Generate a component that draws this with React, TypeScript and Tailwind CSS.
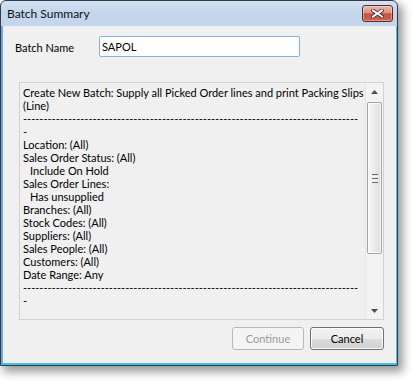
import React from "react";

const FONT = { fontFamily: "Lato, 'Liberation Sans', sans-serif" };

const lines: { text: string; indent?: boolean; dash?: boolean }[] = [
  { text: "Create New Batch: Supply all Picked Order lines and print Packing Slips" },
  { text: "(Line)" },
  { text: "", dash: true },
  { text: "-" },
  { text: "Location: (All)" },
  { text: "Sales Order Status: (All)" },
  { text: "Include On Hold", indent: true },
  { text: "Sales Order Lines:" },
  { text: "Has unsupplied", indent: true },
  { text: "Branches: (All)" },
  { text: "Stock Codes: (All)" },
  { text: "Suppliers: (All)" },
  { text: "Sales People: (All)" },
  { text: "Customers: (All)" },
  { text: "Date Range: Any" },
  { text: "", dash: true },
  { text: "-" },
];

const DASHES = "-".repeat(82);

function CloseButton() {
  return (
    <div className="mt-[4px] mr-[4px] flex h-[17px] w-[31px] items-center justify-center rounded-[3px] border border-[#5e2a24] bg-[linear-gradient(to_bottom,#e9b7ab_0%,#dc9284_45%,#c8503f_52%,#cf6450_100%)] shadow-[inset_0_0_0_1px_rgba(255,255,255,0.35)]">
      <svg width="13" height="9" viewBox="0 0 13 9">
        <path d="M2 1.5 L11 7.5 M11 1.5 L2 7.5" stroke="#3d2320" strokeWidth="3.6" strokeLinecap="square" fill="none" />
        <path d="M2 1.5 L11 7.5 M11 1.5 L2 7.5" stroke="#ffffff" strokeWidth="2" strokeLinecap="square" fill="none" />
      </svg>
    </div>
  );
}

function ScrollBar() {
  return (
    <div className="flex w-[18px] flex-col border-l border-[#e6e6e6] bg-[#f3f3f3]">
      <div className="flex h-[17px] items-center justify-center pt-[1px]">
        <svg width="7" height="4" viewBox="0 0 7 4">
          <path d="M0 4 L3.5 0 L7 4 Z" fill="#4d4d4d" />
        </svg>
      </div>
      <div className="mx-auto mt-[2px] flex h-[152px] w-[15px] items-center justify-center rounded-[2px] border border-[#a3a3a3] bg-[linear-gradient(to_right,#f7f7f7,#ececec_45%,#dcdcdc)] shadow-[inset_0_0_0_1px_rgba(255,255,255,0.8)]">
        <div className="flex flex-col gap-[1px]">
          <div className="h-[1px] w-[6px] bg-[#6b6b6b]" />
          <div className="h-[1px] w-[6px] bg-[#f8f8f8]" />
          <div className="h-[1px] w-[6px] bg-[#6b6b6b]" />
          <div className="h-[1px] w-[6px] bg-[#f8f8f8]" />
          <div className="h-[1px] w-[6px] bg-[#6b6b6b]" />
        </div>
      </div>
      <div className="flex-1" />
      <div className="flex h-[17px] items-center justify-center">
        <svg width="7" height="4" viewBox="0 0 7 4">
          <path d="M0 0 L7 0 L3.5 4 Z" fill="#4d4d4d" />
        </svg>
      </div>
    </div>
  );
}

export default function App() {
  return (
    <div className="h-[381px] w-[413px] bg-white" style={FONT}>
      <div className="flex h-[366px] w-[398px] flex-col rounded-t-[6px] border border-[#2f3c4a] bg-[linear-gradient(to_bottom,#d3e2f3_0px,#c4d6ec_12px,#bfd2ea_100%)] shadow-[4px_5px_10px_1px_rgba(0,0,0,0.4)]">
        <div className="flex h-[25px] items-start justify-between">
          <div className="pl-[6px] pt-[5px] text-[12px] leading-[16px] text-[#111]">Batch Summary</div>
          <CloseButton />
        </div>
        <div className="flex flex-1 flex-col border-b-2 border-l-2 border-r border-b-[#3fc3ec] border-l-[#6fa6dc] border-r-[#3fc3ec] bg-[#f0f0f0] pr-[12px] text-[11px] text-black">
          <div className="flex items-center pl-[12px] pt-[10px]">
            <div className="w-[84px] pt-[3px] leading-[14px]">Batch Name</div>
            <div className="flex h-[21px] w-[201px] items-center rounded-[2px] border border-[#7fb5e6] bg-white pl-[2px] leading-[14px]">
              SAPOL
            </div>
          </div>
          <div className="ml-[16px] mt-[25px] flex h-[238px] w-[365px] border border-[#d2d2d2] bg-[#f0f0f0]">
            <div className="min-w-0 flex-1 pl-[3px] pt-[3px] leading-[13px]">
              {lines.map((l, i) =>
                l.dash ? (
                  <div key={i} className="whitespace-nowrap">
                    {DASHES}
                  </div>
                ) : (
                  <div key={i} className={`whitespace-nowrap ${l.indent ? "pl-[7px]" : ""}`}>
                    {l.text}
                  </div>
                )
              )}
            </div>
            <ScrollBar />
          </div>
          <div className="mt-[7px] flex justify-end gap-[6px]">
            <div className="flex h-[23px] w-[72px] items-center justify-center rounded-[3px] border border-[#b5b9bc] bg-[#f4f4f4] leading-[14px] text-[#9a9a9a]">
              Continue
            </div>
            <div className="flex h-[23px] w-[74px] items-center justify-center rounded-[3px] border border-[#707070] bg-[linear-gradient(to_bottom,#f2f2f2_0%,#ebebeb_50%,#dddddd_51%,#cfcfcf_100%)] leading-[14px] shadow-[inset_0_0_0_1px_#fcfcfc]">
              Cancel
            </div>
          </div>
        </div>
      </div>
    </div>
  );
}
